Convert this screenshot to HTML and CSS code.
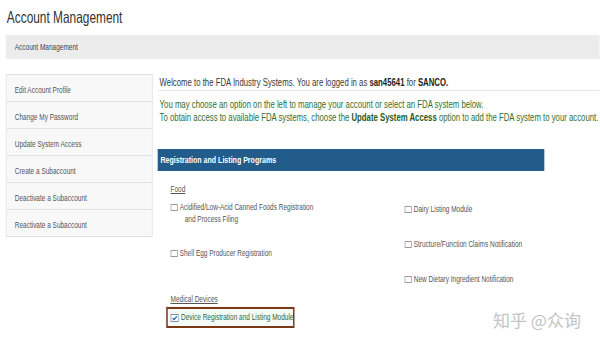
FILE: index.html
```html
<!DOCTYPE html>
<html lang="en">
<head>
<meta charset="utf-8">
<title>Account Management</title>
<link rel="stylesheet" href="styles.css">
</head>
<body>
<div class="page">
  <h1 class="title">Account Management</h1>
  <div class="crumb">Account Management</div>
  <div class="content">
    <nav class="sidebar">
      <a class="nav-item">Edit Account Profile</a>
      <a class="nav-item">Change My Password</a>
      <a class="nav-item">Update System Access</a>
      <a class="nav-item">Create a Subaccount</a>
      <a class="nav-item">Deactivate a Subaccount</a>
      <a class="nav-item">Reactivate a Subaccount</a>
    </nav>
    <main class="main">
      <div class="welcome">Welcome to the FDA Industry Systems. You are logged in as <b>san45641</b> for <b>SANCO.</b></div>
      <p class="intro">You may choose an option on the left to manage your account or select an FDA system below.<br>To obtain access to available FDA systems, choose the <b>Update System Access</b> option to add the FDA system to your account.</p>
      <div class="section-bar">Registration and Listing Programs</div>
      <div class="programs">
        <div class="group-title">Food</div>
        <div class="grid">
          <div class="col col-left">
            <div class="opt"><span class="cb"></span><span class="label">Acidified/Low-Acid Canned Foods Registration<span class="cont">and Process Filing</span></span></div>
            <div class="opt"><span class="cb"></span><span class="label">Shell Egg Producer Registration</span></div>
          </div>
          <div class="col col-right">
            <div class="opt"><span class="cb"></span><span class="label">Dairy Listing Module</span></div>
            <div class="opt"><span class="cb"></span><span class="label">Structure/Function Claims Notification</span></div>
            <div class="opt"><span class="cb"></span><span class="label">New Dietary Ingredient Notification</span></div>
          </div>
        </div>
        <div class="group-title group-med">Medical Devices</div>
        <div class="highlight">
          <span class="cb cb-checked"><svg viewBox="0 0 10 10" width="100%" height="100%" preserveAspectRatio="none"><path d="M2 5.2 L4.2 7.6 L8.4 2.2" fill="none" stroke="#2456a8" stroke-width="1.8"/></svg></span>
          <span class="label label-device">Device Registration and Listing Module</span>
        </div>
      </div>
    </main>
  </div>
</div>
<div class="watermark">知乎 @众询</div>
</body>
</html>
```
FILE: styles.css
```css
html, body {
  margin: 0;
  padding: 0;
  background: #ffffff;
  overflow: hidden;
}

body {
  width: 600px;
  height: 343px;
  position: relative;
  font-family: "Liberation Sans", Arial, sans-serif;
}

/* The source screenshot is horizontally squeezed; the page is laid out
   at full width and compressed as a whole. */
.page {
  width: 833px;
  box-sizing: border-box;
  padding: 7px 0 0 8px;
  transform: scaleX(0.72);
  transform-origin: 0 0;
  overflow: hidden;
}

.title {
  margin: 0 0 0 1.5px;
  font-size: 16.5px;
  line-height: 20px;
  font-weight: normal;
  color: #333333;
}

.crumb {
  margin-top: 8px;
  height: 24px;
  line-height: 24px;
  background: #ececec;
  padding-left: 12.5px;
  font-size: 9px;
  color: #444444;
}

.content {
  margin-top: 15px;
  display: flex;
  align-items: flex-start;
}

.sidebar {
  width: 204px;
  flex: none;
  box-sizing: border-box;
  border: 1px solid #e1e1e1;
  background: #f8f8f8;
  display: flex;
  flex-direction: column;
}

.nav-item {
  display: block;
  height: 27px;
  box-sizing: border-box;
  padding: 4px 0 0 11.5px;
  line-height: 22px;
  border-bottom: 1px solid #e3e3e3;
  font-size: 9px;
  color: #555555;
}

.nav-item:last-child {
  border-bottom: none;
  height: 26px;
}

.main {
  flex: 1;
  margin-left: 6.9px;
  min-width: 0;
}

.welcome {
  height: 16px;
  line-height: 16px;
  padding-left: 2.8px;
  border-bottom: 1px solid #e6e6e6;
  font-size: 10.8px;
  color: #3a3a3a;
  white-space: nowrap;
}

.welcome b {
  color: #222222;
}

.intro {
  margin: 7px 0 0 0;
  padding-left: 2.8px;
  font-size: 10.8px;
  line-height: 13px;
  color: #2f7030;
  white-space: nowrap;
}

.intro b {
  color: #1e5a22;
}

.section-bar {
  margin-top: 25px;
  width: 537px;
  height: 22px;
  line-height: 22px;
  box-sizing: border-box;
  padding-left: 4px;
  background: #215c8a;
  color: #ffffff;
  font-size: 9.8px;
  font-weight: bold;
}

.programs {
  padding-left: 18px;
}

.group-title {
  margin-top: 12px;
  font-size: 9px;
  line-height: 12px;
  color: #555555;
  text-decoration: underline;
}

.grid {
  display: flex;
  margin-top: 6px;
}

.col {
  display: flex;
  flex-direction: column;
}

.col-left {
  width: 325px;
  gap: 22px;
}

.col-right {
  margin-top: 2px;
  gap: 23px;
}

.opt {
  display: flex;
  align-items: flex-start;
  font-size: 9px;
  line-height: 12px;
  color: #555555;
}

.cb {
  flex: none;
  width: 9.7px;
  height: 7px;
  box-sizing: border-box;
  margin-top: 2.5px;
  border-style: solid;
  border-color: #9a9a9a;
  border-width: 1px 1.4px;
  background: #ffffff;
}

.label {
  margin-left: 3px;
  white-space: nowrap;
}

.cont {
  display: block;
  padding-left: 7px;
}

.group-med {
  margin-top: 8px;
}

.highlight {
  margin-top: 2px;
  margin-left: -5.5px;
  width: 178px;
  height: 21px;
  box-sizing: border-box;
  border-style: solid;
  border-color: #7a3817;
  border-width: 2px 2.8px;
  box-shadow: 0 0 1px #7a3817;
  background: #f6fbf6;
  display: flex;
  align-items: center;
  padding-left: 3.6px;
}

.cb-checked {
  margin-top: 0;
  width: 11px;
  height: 8px;
  border-color: #7b8fae;
  display: flex;
}

.cb-checked svg {
  display: block;
}

.label-device {
  margin-left: 3.5px;
  font-size: 9px;
  line-height: 17px;
  color: #2c6a44;
}

.watermark {
  position: absolute;
  left: 493px;
  top: 309px;
  font-family: "Noto Sans CJK SC", "Noto Sans", sans-serif;
  font-size: 17px;
  line-height: 22px;
  color: #c4c4c4;
  text-shadow: 0 0 2px #ffffff, 0 0 1px #ffffff;
  white-space: nowrap;
}
```
